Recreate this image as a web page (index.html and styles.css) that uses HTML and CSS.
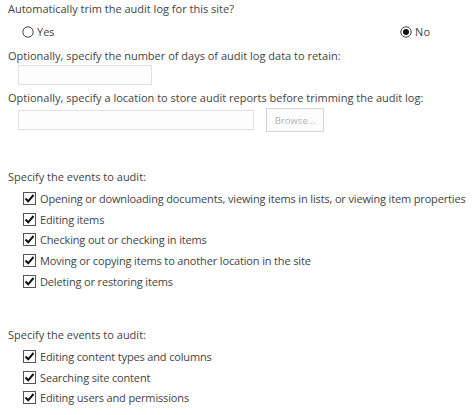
FILE: index.html
```html
<!DOCTYPE html>
<html lang="en">

<head>
  <meta charset="UTF-8">
  <meta name="viewport" content="width=device-width, initial-scale=1.0">
  <title>Audit Log Settings</title>
  <link rel="stylesheet" href="styles.css">
</head>

<body>
  <div class="section trim">
    <p class="label">Automatically trim the audit log for this site?</p>
    <div class="radio-row">
      <span class="radio">
        <svg width="12" height="12" viewBox="0 0 12 12"><circle cx="6" cy="6" r="5.2" fill="#fff" stroke="#444" stroke-width="1"/></svg>
        Yes
      </span>
      <span class="radio">
        <svg width="12" height="12" viewBox="0 0 12 12"><circle cx="6" cy="6" r="5.2" fill="#fff" stroke="#444" stroke-width="1"/><circle cx="6" cy="6" r="3" fill="#111"/></svg>
        No
      </span>
    </div>

    <p class="label">Optionally, specify the number of days of audit log data to retain:</p>
    <div class="field-row first">
      <input class="text-input days" type="text" disabled>
    </div>

    <p class="label">Optionally, specify a location to store audit reports before trimming the audit log:</p>
    <div class="field-row">
      <input class="text-input location" type="text" disabled>
      <button class="browse" disabled>Browse...</button>
    </div>
  </div>

  <div class="section">
    <p class="label">Specify the events to audit:</p>
    <ul class="checks">
      <li><svg class="box" width="13" height="13" viewBox="0 0 13 13"><rect x="0.5" y="0.5" width="12" height="12" fill="#fff" stroke="#555"/><path d="M2.5 6.5 L5.2 9.3 L10.5 3" fill="none" stroke="#111" stroke-width="2"/></svg>Opening or downloading documents, viewing items in lists, or viewing item properties</li>
      <li><svg class="box" width="13" height="13" viewBox="0 0 13 13"><rect x="0.5" y="0.5" width="12" height="12" fill="#fff" stroke="#555"/><path d="M2.5 6.5 L5.2 9.3 L10.5 3" fill="none" stroke="#111" stroke-width="2"/></svg>Editing items</li>
      <li><svg class="box" width="13" height="13" viewBox="0 0 13 13"><rect x="0.5" y="0.5" width="12" height="12" fill="#fff" stroke="#555"/><path d="M2.5 6.5 L5.2 9.3 L10.5 3" fill="none" stroke="#111" stroke-width="2"/></svg>Checking out or checking in items</li>
      <li><svg class="box" width="13" height="13" viewBox="0 0 13 13"><rect x="0.5" y="0.5" width="12" height="12" fill="#fff" stroke="#555"/><path d="M2.5 6.5 L5.2 9.3 L10.5 3" fill="none" stroke="#111" stroke-width="2"/></svg>Moving or copying items to another location in the site</li>
      <li><svg class="box" width="13" height="13" viewBox="0 0 13 13"><rect x="0.5" y="0.5" width="12" height="12" fill="#fff" stroke="#555"/><path d="M2.5 6.5 L5.2 9.3 L10.5 3" fill="none" stroke="#111" stroke-width="2"/></svg>Deleting or restoring items</li>
    </ul>
  </div>

  <div class="section">
    <p class="label">Specify the events to audit:</p>
    <ul class="checks">
      <li><svg class="box" width="13" height="13" viewBox="0 0 13 13"><rect x="0.5" y="0.5" width="12" height="12" fill="#fff" stroke="#555"/><path d="M2.5 6.5 L5.2 9.3 L10.5 3" fill="none" stroke="#111" stroke-width="2"/></svg>Editing content types and columns</li>
      <li><svg class="box" width="13" height="13" viewBox="0 0 13 13"><rect x="0.5" y="0.5" width="12" height="12" fill="#fff" stroke="#555"/><path d="M2.5 6.5 L5.2 9.3 L10.5 3" fill="none" stroke="#111" stroke-width="2"/></svg>Searching site content</li>
      <li><svg class="box" width="13" height="13" viewBox="0 0 13 13"><rect x="0.5" y="0.5" width="12" height="12" fill="#fff" stroke="#555"/><path d="M2.5 6.5 L5.2 9.3 L10.5 3" fill="none" stroke="#111" stroke-width="2"/></svg>Editing users and permissions</li>
    </ul>
  </div>
</body>

</html>
```
FILE: styles.css
```css
body {
  margin: 0;
  padding: 0 8px;
  font-family: "Open Sans", sans-serif;
  font-size: 11px;
  color: #444;
  background: #fff;
}

.section {
  margin-bottom: 34px;
}

.section.trim {
  margin-bottom: 36px;
}

.label {
  margin: 0;
  height: 18px;
  line-height: 18px;
  white-space: nowrap;
}

.radio-row {
  display: flex;
  justify-content: space-between;
  padding: 7px 36px 8px 14px;
  height: 14px;
  line-height: 14px;
}

.radio {
  display: flex;
  align-items: center;
  gap: 3px;
}

.field-row {
  display: flex;
  align-items: center;
  gap: 12px;
  padding: 1px 0 0 10px;
  height: 24px;
}

.field-row.first {
  height: 20px;
  padding: 0 0 4px 10px;
}

.text-input {
  height: 20px;
  box-sizing: border-box;
  border: 1px solid #e1e1e1;
  background: #fdfdfd;
  padding: 0;
}

.days {
  width: 134px;
}

.location {
  width: 236px;
}

.browse {
  height: 24px;
  width: 58px;
  box-sizing: border-box;
  border: 1px solid #d4d4d4;
  background: #fdfdfd;
  color: #b1b1b1;
  font-family: inherit;
  font-size: 9.5px;
  padding: 0;
}

.checks {
  list-style: none;
  margin: 0;
  padding: 2px 0 0 15px;
}

.checks li {
  display: flex;
  align-items: center;
  gap: 4px;
  height: 20.8px;
  white-space: nowrap;
  letter-spacing: -0.15px;
}

.box {
  flex-shrink: 0;
}
```
